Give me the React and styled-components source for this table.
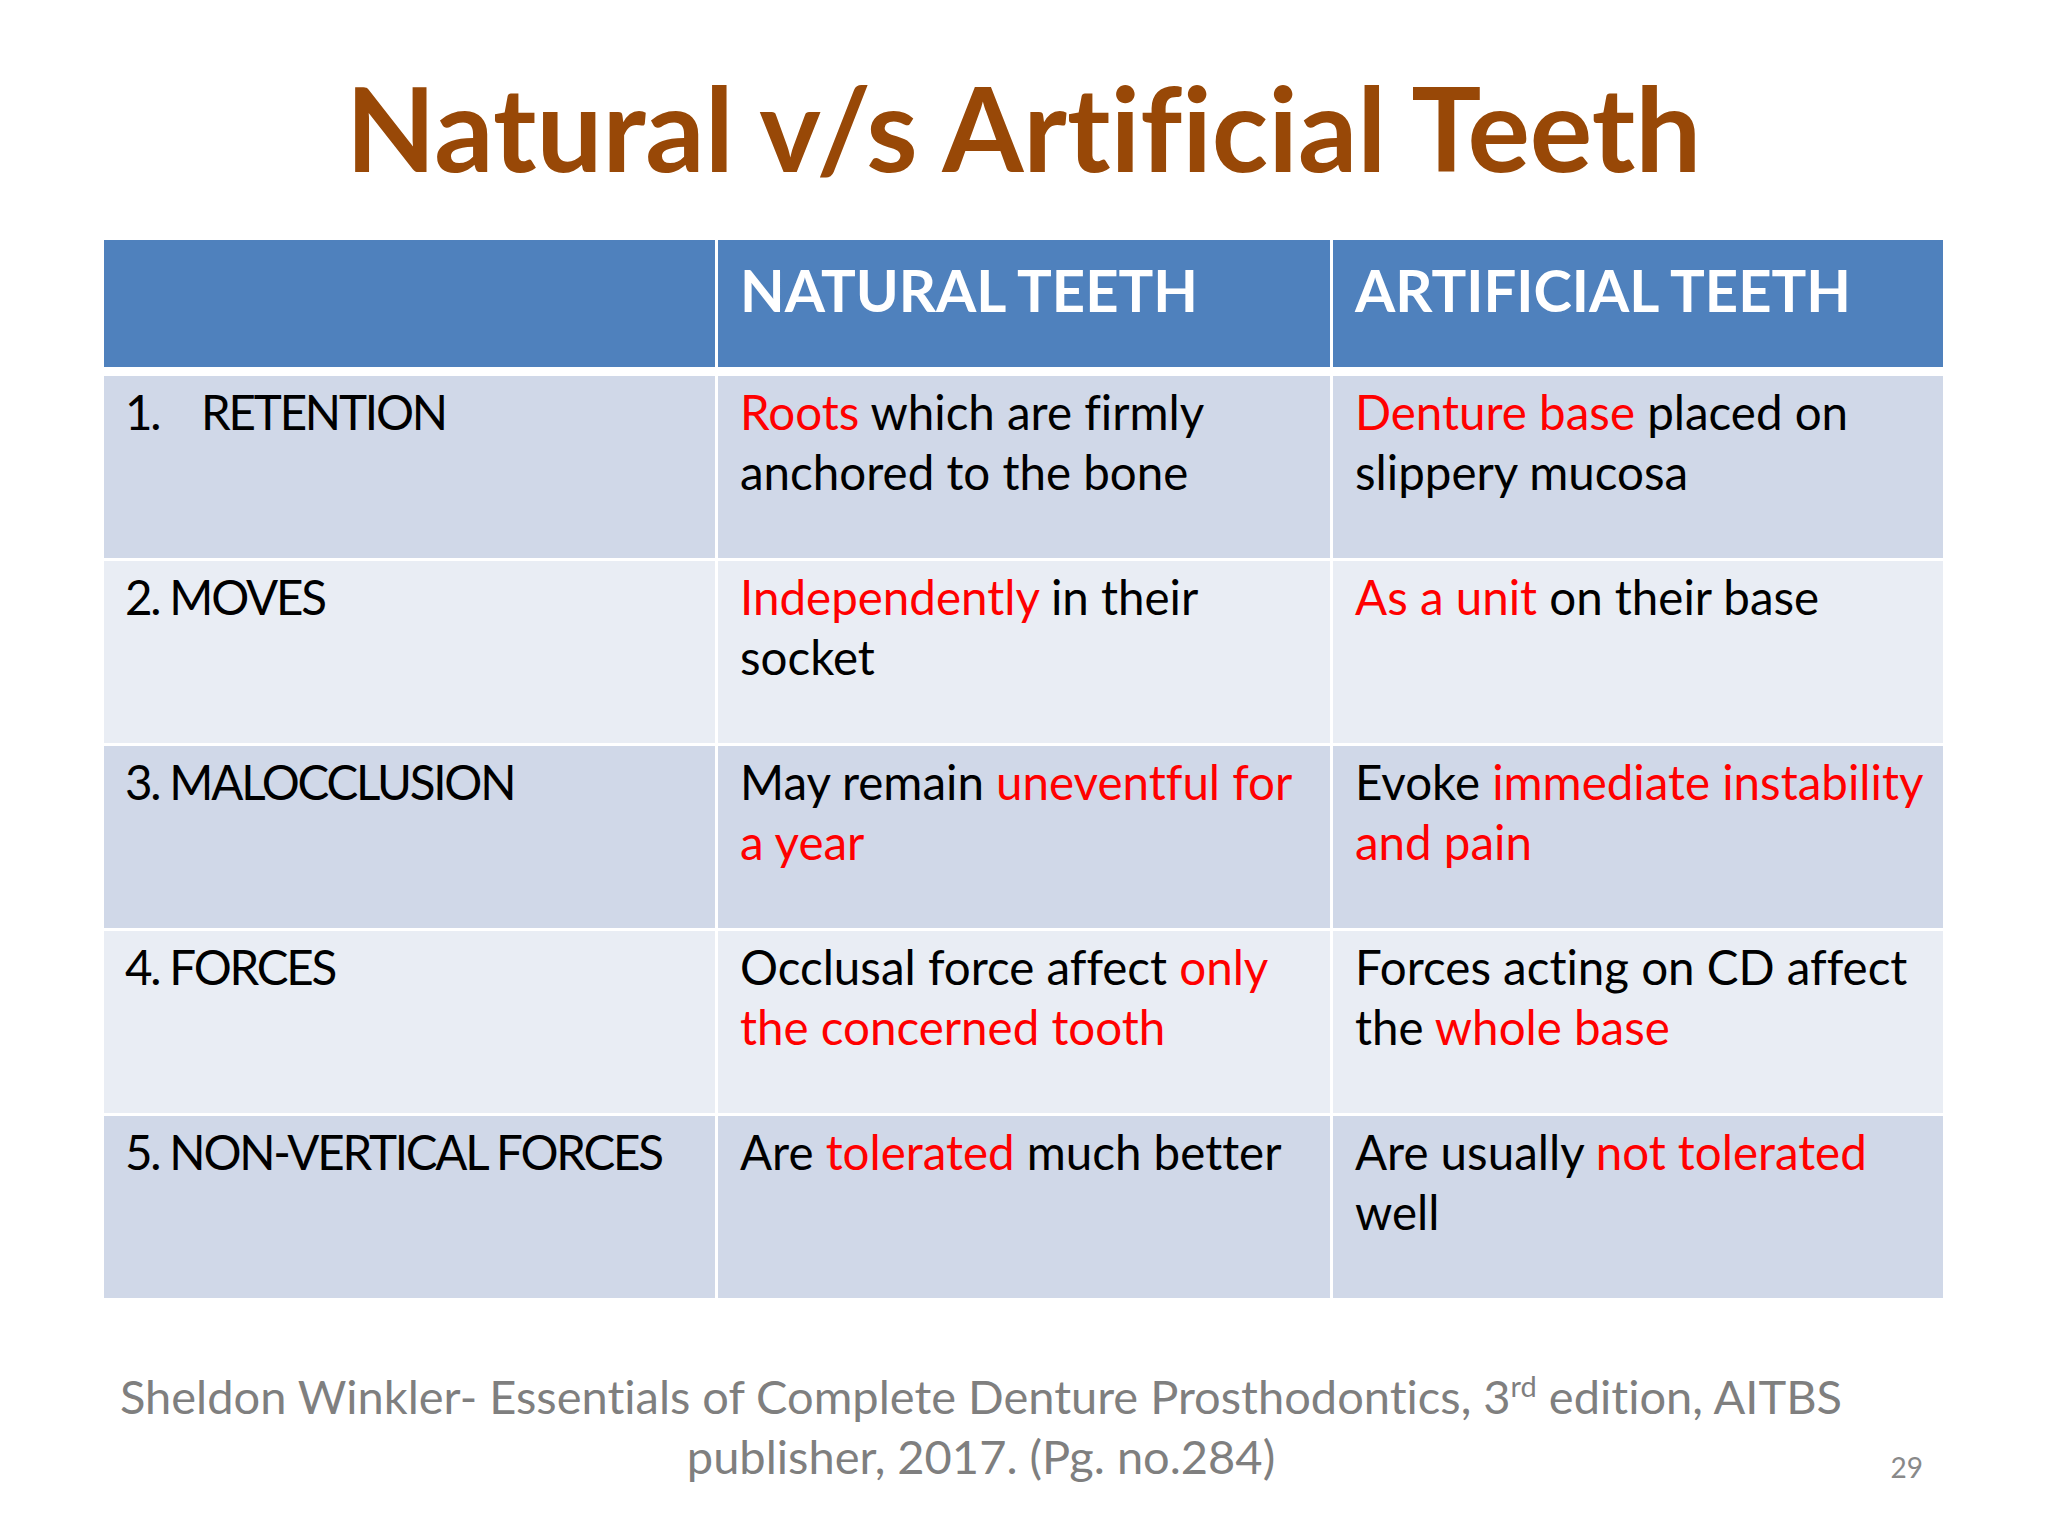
import React from 'react'
import styled, { createGlobalStyle } from 'styled-components'

const GlobalStyle = createGlobalStyle`
  html, body {
    margin: 0;
    padding: 0;
    background: #ffffff;
  }
  body {
    font-family: Lato, "Open Sans", sans-serif;
    font-variant-ligatures: none;
  }
`

const Slide = styled.div`
  width: 2048px;
  height: 1536px;
  box-sizing: border-box;
  padding: 72px 105px 0 104px;
  display: flex;
  flex-direction: column;
  background: #ffffff;
  overflow: hidden;
`

const Title = styled.h1`
  margin: 0;
  height: 110px;
  font-family: Lato, sans-serif;
  font-weight: 700;
  font-size: 117px;
  line-height: 110px;
  color: #984807;
  text-align: center;
  white-space: nowrap;
`

const Table = styled.div`
  margin-top: 58px;
  display: flex;
  flex-direction: column;
  gap: 3px;
`

const Row = styled.div`
  display: grid;
  grid-template-columns: 611px 612px 1fr;
  gap: 3px;
  height: ${(p) => (p.$header ? '127px' : '182px')};
  margin-bottom: ${(p) => (p.$header ? '6px' : '0')};
`

const HeadCell = styled.div`
  background: #4f81bd;
  padding: 15px 0 0 22px;
  color: #ffffff;
  font-weight: 700;
  font-size: 58px;
  line-height: 70px;
  white-space: nowrap;
`

const Cell = styled.div`
  background: ${(p) => (p.$odd ? '#d0d8e8' : '#e9edf4')};
  padding: 6px 0 0 ${(p) => (p.$first ? '21px' : '22px')};
  color: #000000;
  font-size: 47.5px;
  line-height: 60px;
  letter-spacing: ${(p) => (p.$first ? '-2.2px' : '0')};
  white-space: nowrap;
`

const Line = styled.div``

const Num = styled.span`
  display: inline-block;
  width: 76px;
`

const Hi = styled.span`
  color: #ff0000;
`

const Footer = styled.div`
  margin-top: 68px;
  display: flex;
  align-items: flex-end;
`

const Citation = styled.p`
  margin: 0;
  width: 1754px;
  font-size: 47px;
  line-height: 60px;
  color: #7f7f7f;
  text-align: center;
  white-space: nowrap;
`

const Sup = styled.span`
  font-size: 29px;
  position: relative;
  top: -17px;
  line-height: 0;
`

const PageNum = styled.div`
  flex: 1;
  padding-right: 20px;
  margin-bottom: 2px;
  text-align: right;
  font-size: 28px;
  line-height: 34px;
  color: #898989;
`

const rows = [
  {
    label: (
      <>
        <Num>1.</Num>RETENTION
      </>
    ),
    natural: [
      <>
        <Hi>Roots</Hi> which are firmly
      </>,
      'anchored to the bone',
    ],
    artificial: [
      <>
        <Hi>Denture base</Hi> placed on
      </>,
      'slippery mucosa',
    ],
  },
  {
    label: '2. MOVES',
    natural: [
      <>
        <Hi>Independently</Hi> in their
      </>,
      'socket',
    ],
    artificial: [
      <>
        <Hi>As a unit</Hi> on their base
      </>,
    ],
  },
  {
    label: '3. MALOCCLUSION',
    natural: [
      <>
        May remain <Hi>uneventful for</Hi>
      </>,
      <Hi>a year</Hi>,
    ],
    artificial: [
      <>
        Evoke <Hi>immediate instability</Hi>
      </>,
      <Hi>and pain</Hi>,
    ],
  },
  {
    label: '4. FORCES',
    natural: [
      <>
        Occlusal force affect <Hi>only</Hi>
      </>,
      <Hi>the concerned tooth</Hi>,
    ],
    artificial: [
      'Forces acting on CD affect',
      <>
        the <Hi>whole base</Hi>
      </>,
    ],
  },
  {
    label: '5. NON-VERTICAL FORCES',
    natural: [
      <>
        Are <Hi>tolerated</Hi> much better
      </>,
    ],
    artificial: [
      <>
        Are usually <Hi>not tolerated</Hi>
      </>,
      'well',
    ],
  },
]

export default function App() {
  return (
    <>
      <GlobalStyle />
      <Slide>
        <Title>Natural v/s Artificial Teeth</Title>
        <Table>
          <Row $header>
            <HeadCell />
            <HeadCell>NATURAL TEETH</HeadCell>
            <HeadCell>ARTIFICIAL TEETH</HeadCell>
          </Row>
          {rows.map((row, i) => (
            <Row key={i}>
              <Cell $odd={i % 2 === 0} $first>
                {row.label}
              </Cell>
              <Cell $odd={i % 2 === 0}>
                {row.natural.map((l, j) => (
                  <Line key={j}>{l}</Line>
                ))}
              </Cell>
              <Cell $odd={i % 2 === 0}>
                {row.artificial.map((l, j) => (
                  <Line key={j}>{l}</Line>
                ))}
              </Cell>
            </Row>
          ))}
        </Table>
        <Footer>
          <Citation>
            Sheldon Winkler- Essentials of Complete Denture Prosthodontics, 3<Sup>rd</Sup> edition, AITBS
            <br />
            publisher, 2017. (Pg. no.284)
          </Citation>
          <PageNum>29</PageNum>
        </Footer>
      </Slide>
    </>
  )
}
